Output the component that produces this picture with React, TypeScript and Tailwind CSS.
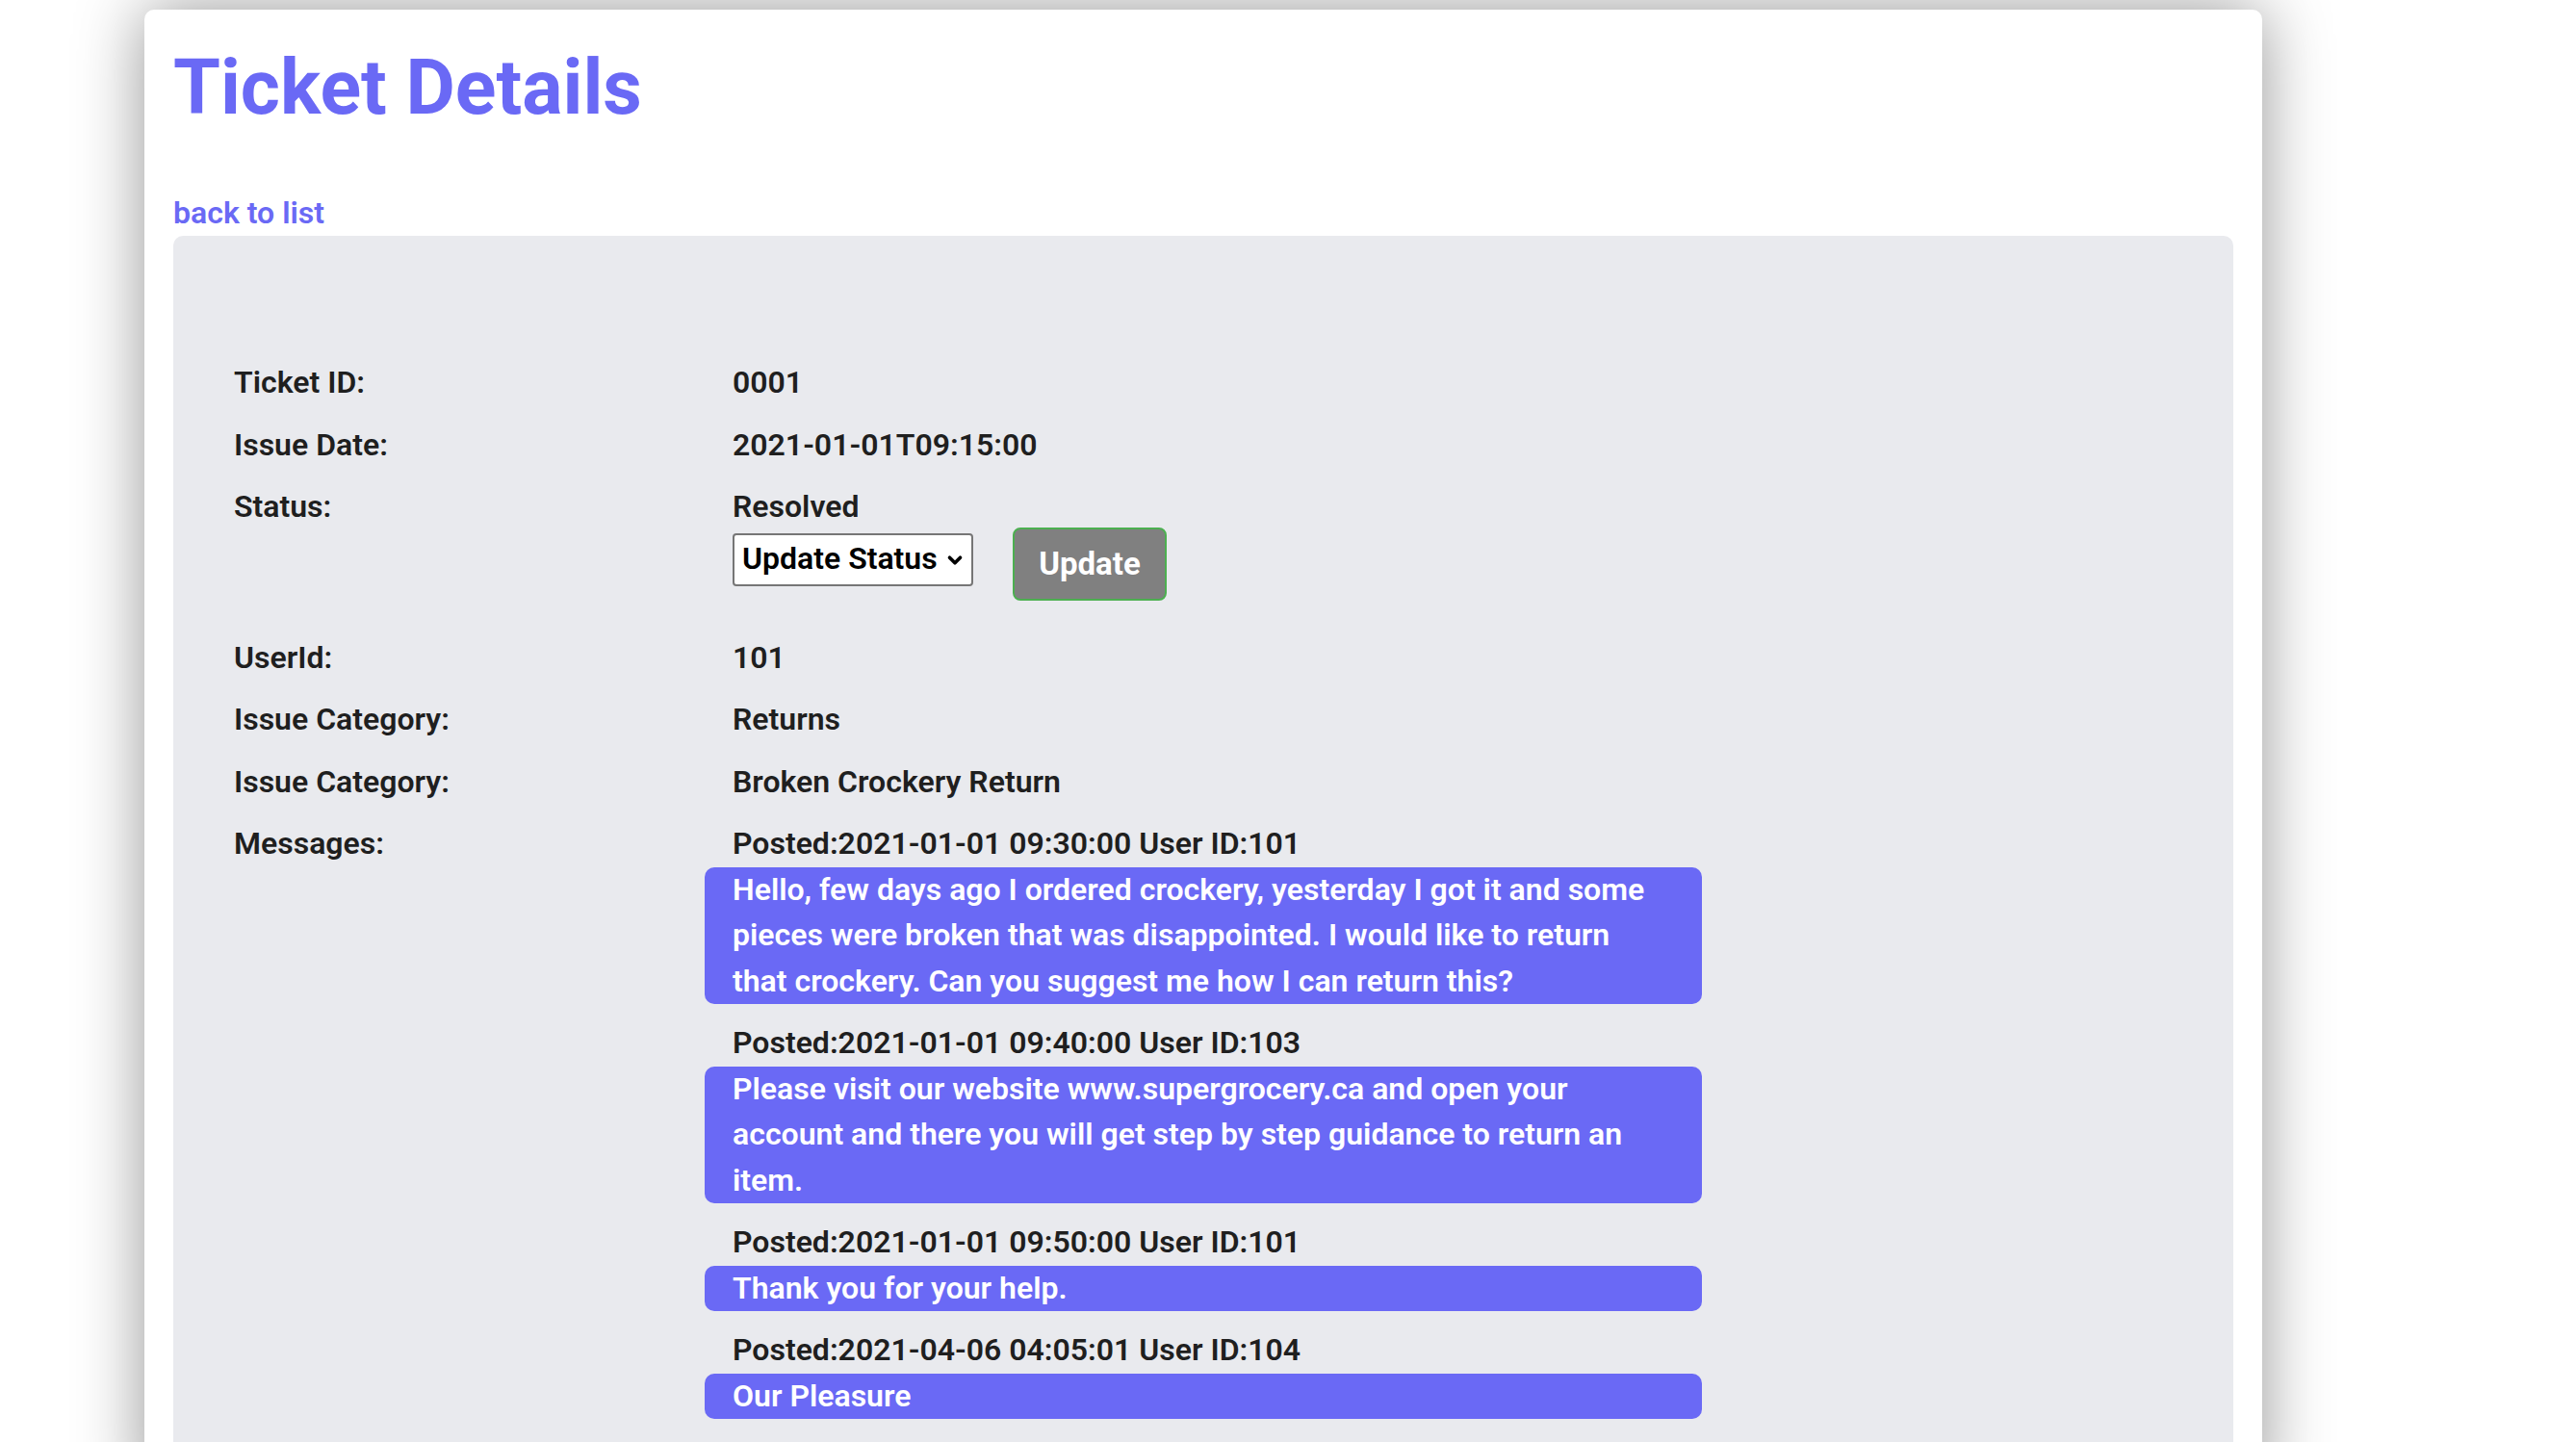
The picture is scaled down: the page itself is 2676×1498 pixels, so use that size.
import { ChevronDown } from "lucide-react";

const details = [
  { label: "Ticket ID:", value: "0001" },
  { label: "Issue Date:", value: "2021-01-01T09:15:00" },
];

const moreDetails = [
  { label: "UserId:", value: "101" },
  { label: "Issue Category:", value: "Returns" },
  { label: "Issue Category:", value: "Broken Crockery Return" },
];

const messages = [
  {
    posted: "2021-01-01 09:30:00",
    userId: "101",
    text: "Hello, few days ago I ordered crockery, yesterday I got it and some pieces were broken that was disappointed. I would like to return that crockery. Can you suggest me how I can return this?",
  },
  {
    posted: "2021-01-01 09:40:00",
    userId: "103",
    text: "Please visit our website www.supergrocery.ca and open your account and there you will get step by step guidance to return an item.",
  },
  {
    posted: "2021-01-01 09:50:00",
    userId: "101",
    text: "Thank you for your help.",
  },
  {
    posted: "2021-04-06 04:05:01",
    userId: "104",
    text: "Our Pleasure",
  },
];

const Row = ({ label, children }: { label: string; children: React.ReactNode }) => (
  <div className="grid grid-cols-[489px_1fr]">
    <div>{label}</div>
    <div>{children}</div>
  </div>
);

const App = () => {
  return (
    <div
      className="min-h-screen bg-white pl-[150px] pt-[10px] text-[32px] leading-[47.5px] font-semibold text-[#1f1f1f]"
      style={{ fontFamily: "Roboto, 'Noto Sans', sans-serif" }}
    >
      <div className="w-[2200px] rounded-[10px] bg-white px-[30px] pt-[36px] shadow-[0_0_70px_rgba(0,0,0,0.42)]">
        <h1 className="text-[79px] leading-[90px] font-bold text-[#6a69f5]">Ticket Details</h1>

        <a href="#" className="mt-[61px] block w-fit leading-[48px] text-[#6a69f5]">
          back to list
        </a>

        {/* Ticket panel */}
        <div className="rounded-[10px] bg-[#e9eaee] pb-[80px] pl-[63px] pt-[129px]">
          <div className="flex flex-col gap-[17px]">
            {details.map((d) => (
              <Row key={d.label} label={d.label}>
                <div className="pl-[29px]">{d.value}</div>
              </Row>
            ))}

            <Row label="Status:">
              <div className="mb-[19px] pl-[29px]">
                <div>Resolved</div>
                <div className="-mt-[3px] flex items-start gap-[41px]">
                  <div className="relative mt-[6px]">
                    <select className="h-[55px] w-[250px] appearance-none rounded-[4px] border-2 border-[#767676] bg-white pl-[8px] text-[32px] font-semibold text-black">
                      <option>Update Status</option>
                      <option>Open</option>
                      <option>Resolved</option>
                    </select>
                    <ChevronDown
                      className="pointer-events-none absolute right-[8px] top-[17px] h-[22px] w-[22px] text-black"
                      strokeWidth={4}
                    />
                  </div>
                  <button className="h-[76px] w-[160px] rounded-[8px] border-2 border-[#4caf50] bg-[#808080] text-[33px] font-bold text-white">
                    Update
                  </button>
                </div>
              </div>
            </Row>

            {moreDetails.map((d, i) => (
              <Row key={i} label={d.label}>
                <div className="pl-[29px]">{d.value}</div>
              </Row>
            ))}

            <Row label="Messages:">
              <div className="flex flex-col gap-[17px]">
                {messages.map((m, i) => (
                  <div key={i}>
                    <div className="pl-[29px]">
                      Posted:{m.posted} User ID:{m.userId}
                    </div>
                    <div className="w-[1036px] rounded-[10px] bg-[#6a69f5] pl-[29px] pr-[48px] text-white">
                      {m.text}
                    </div>
                  </div>
                ))}
              </div>
            </Row>
          </div>
        </div>
      </div>
    </div>
  );
};

export default App;
